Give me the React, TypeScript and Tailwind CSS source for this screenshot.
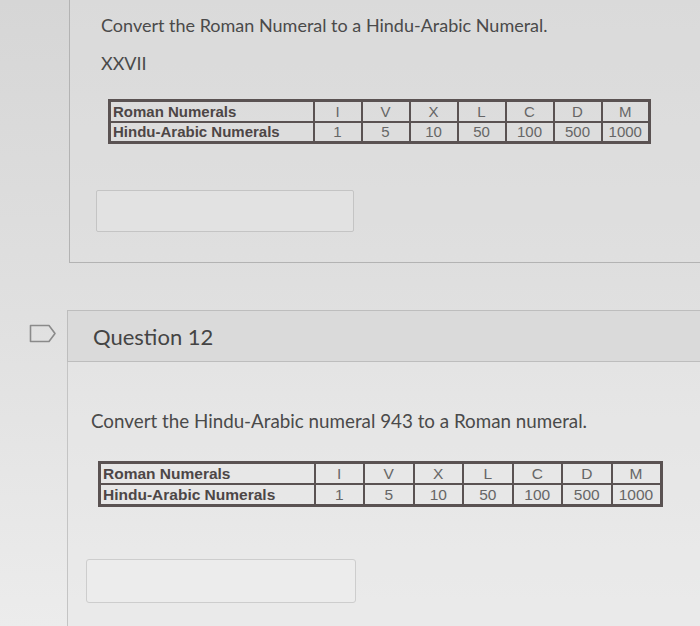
import React from "react";

const romans = ["I", "V", "X", "L", "C", "D", "M"];
const values = ["1", "5", "10", "50", "100", "500", "1000"];

function NumTable({ labelW, colW, rowH, fs }: { labelW: number; colW: number; rowH: number; fs: string }) {
  return (
    <table
      className={`border-collapse border-[3px] border-[#5a5252] ${fs} font-['Liberation_Sans',Arial,sans-serif] leading-none`}
    >
      <tbody>
        <tr style={{ height: rowH }}>
          <td
            className="border-2 border-[#5a5252] pl-[2px] font-bold text-[#4d4646] text-left"
            style={{ width: labelW }}
          >
            Roman Numerals
          </td>
          {romans.map((r) => (
            <td key={r} className="border-2 border-[#5a5252] text-center text-[#666]" style={{ width: colW }}>
              {r}
            </td>
          ))}
        </tr>
        <tr style={{ height: rowH }}>
          <td className="border-2 border-[#5a5252] pl-[2px] font-bold text-[#4d4646] text-left">
            Hindu-Arabic Numerals
          </td>
          {values.map((v) => (
            <td key={v} className="border-2 border-[#5a5252] text-center text-[#666]">
              {v}
            </td>
          ))}
        </tr>
      </tbody>
    </table>
  );
}

export default function App() {
  return (
    <div className="w-[700px] h-[626px] overflow-hidden bg-gradient-to-b from-[#d6d6d6] via-[#e0e0e0] to-[#ececec] font-['Lato',sans-serif] text-[#4a4a4a]">
      {/* Panel 1 */}
      <div className="ml-[69px] h-[263px] border-l border-b border-[#b3b3b3] bg-[#e0e0e0]/40 pl-[31px] pt-[14px]">
        <p className="text-[18px] leading-[22px]">Convert the Roman Numeral to a Hindu-Arabic Numeral.</p>
        <p className="mt-[16px] text-[18px] leading-[22px]">XXVII</p>
        <div className="mt-[25px] ml-[7px]">
          <NumTable labelW={204} colW={48} rowH={21} fs="text-[15px]" />
        </div>
        <div className="mt-[46px] -ml-[5px] w-[258px] h-[42px] border border-[#c4c4c4] rounded-[2px] bg-[#e2e2e2]" />
      </div>

      {/* Question 12 header */}
      <div className="mt-[47px] flex h-[52px]">
        <div className="w-[67px] flex items-center pl-[29px] pb-[5px]">
          <svg width="28" height="19" viewBox="0 0 28 19">
            <path d="M1.5 1.5 H20 L26 9.5 L20 17.5 H1.5 Z" fill="none" stroke="#8a8a8a" strokeWidth="1.6" strokeLinejoin="round" />
          </svg>
        </div>
        <div className="flex-1 flex items-center border-t border-b border-l border-[#bdbdbd] bg-[#dadada] pl-[25px]">
          <span className="text-[22px] text-[#444]">Question 12</span>
        </div>
      </div>

      {/* Body */}
      <div className="ml-[67px] h-[300px] border-l border-[#c4c4c4] bg-[#e8e8e8]/40 pl-[23px] pt-[47px]">
        <p className="text-[18.8px] leading-[24px]">Convert the Hindu-Arabic numeral 943 to a Roman numeral.</p>
        <div className="mt-[28px] ml-[7px]">
          <NumTable labelW={215} colW={49.5} rowH={21.5} fs="text-[15.5px]" />
        </div>
        <div className="mt-[52px] -ml-[5px] w-[270px] h-[44px] border border-[#cdcdcd] rounded-[3px] bg-[#ececec]" />
      </div>
    </div>
  );
}
